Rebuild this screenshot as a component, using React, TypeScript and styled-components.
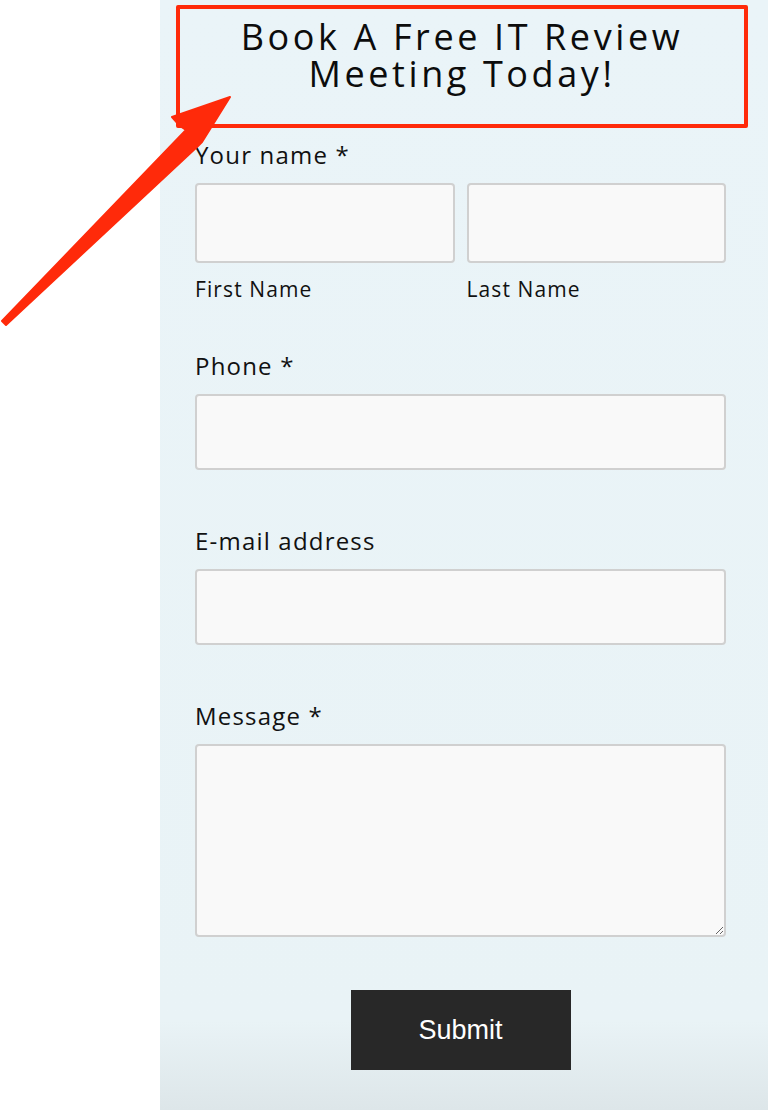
import styled, { createGlobalStyle } from "styled-components";

const GlobalStyle = createGlobalStyle`
    html, body {
        margin: 0;
        padding: 0;
        background: #ffffff;
    }
    * {
        box-sizing: border-box;
    }
`;

const Page = styled.div`
    position: relative;
    display: flex;
    width: 768px;
    height: 1110px;
    overflow: hidden;
`;

const Gutter = styled.div`
    width: 160px;
    flex-shrink: 0;
    background: #ffffff;
`;

const Panel = styled.div`
    flex: 1;
    display: flex;
    flex-direction: column;
    padding: 5px 42px 0 35px;
    background: linear-gradient(to bottom, #eaf4f8 0%, #e9f3f6 92%, #dde6e9 100%);
    font-family: "Open Sans", Lato, sans-serif;
    color: #111;
`;

const Highlight = styled.div`
    margin: 0 -22px 0 -19px;
    height: 123px;
    border: 4px solid #ff2a0a;
    border-radius: 2px;
    display: flex;
    align-items: flex-start;
    justify-content: center;
    padding-top: 9px;
`;

const Title = styled.h1`
    margin: 0;
    font-family: "Open Sans", sans-serif;
    font-weight: 500;
    font-size: 36px;
    line-height: 37px;
    letter-spacing: 3.6px;
    text-align: center;
    color: #0c0c0c;
`;

const Field = styled.div<{ $gap?: number }>`
    display: flex;
    flex-direction: column;
    margin-top: ${(p) => p.$gap ?? 0}px;
`;

const Label = styled.label`
    font-size: 24px;
    line-height: 30px;
    letter-spacing: 1.2px;
    margin-bottom: 13px;
`;

const NameRow = styled.div`
    display: grid;
    grid-template-columns: 1fr 1fr;
    column-gap: 12px;
`;

const NamePart = styled.div`
    display: flex;
    flex-direction: column;
`;

const Input = styled.input<{ $h: number }>`
    width: 100%;
    height: ${(p) => p.$h}px;
    background: #f9f9f9;
    border: 2px solid #d0d0d0;
    border-radius: 4px;
    outline: none;
`;

const TextArea = styled.textarea`
    width: 100%;
    height: 193px;
    background: #f9f9f9;
    border: 2px solid #d0d0d0;
    border-radius: 4px;
    outline: none;
    resize: vertical;
`;

const SubLabel = styled.span`
    font-size: 21px;
    line-height: 26px;
    letter-spacing: 1.1px;
    margin-top: 13px;
`;

const Submit = styled.button`
    align-self: center;
    margin-top: 53px;
    width: 220px;
    height: 80px;
    border: none;
    background: #282828;
    color: #ffffff;
    font-family: "Liberation Sans", Arial, sans-serif;
    font-size: 27px;
`;

const Arrow = styled.svg`
    position: absolute;
    left: 0;
    top: 0;
    pointer-events: none;
`;

const App = () => (
    <Page>
        <GlobalStyle />
        <Gutter />
        <Panel>
            <Highlight>
                <Title>
                    Book A Free IT Review
                    <br />
                    Meeting Today!
                </Title>
            </Highlight>
            <Field $gap={12}>
                <Label>Your name *</Label>
                <NameRow>
                    <NamePart>
                        <Input $h={80} />
                        <SubLabel>First Name</SubLabel>
                    </NamePart>
                    <NamePart>
                        <Input $h={80} />
                        <SubLabel>Last Name</SubLabel>
                    </NamePart>
                </NameRow>
            </Field>
            <Field $gap={49}>
                <Label>Phone *</Label>
                <Input $h={76} />
            </Field>
            <Field $gap={56}>
                <Label>E-mail address</Label>
                <Input $h={76} />
            </Field>
            <Field $gap={56}>
                <Label>Message *</Label>
                <TextArea />
            </Field>
            <Submit>Submit</Submit>
        </Panel>
        <Arrow width="260" height="340" viewBox="0 0 260 340">
            <polygon
                points="2,321 6,325 198,146 202,142 230,97 172,117 180,126 186,130"
                fill="#ff2a0a"
                stroke="#ff2a0a"
                strokeWidth="2"
                strokeLinejoin="round"
            />
        </Arrow>
    </Page>
);

export default App;
